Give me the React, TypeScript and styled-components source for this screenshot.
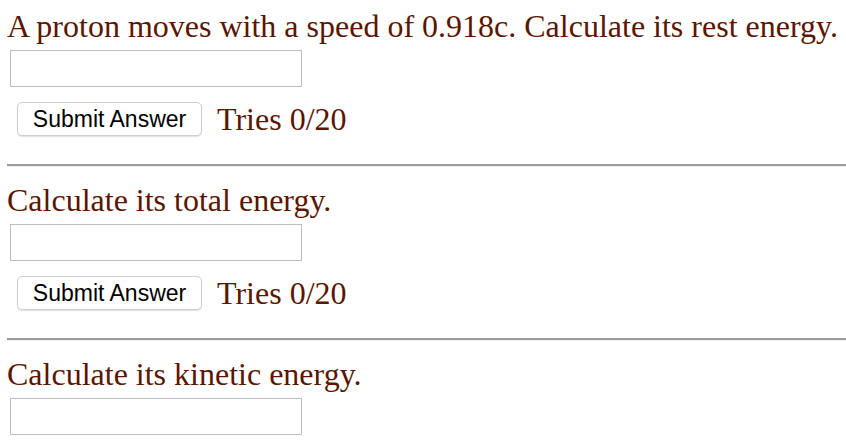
import styled, { createGlobalStyle } from "styled-components";

const GlobalStyle = createGlobalStyle`
  body {
    margin: 0;
    background: #fff;
  }
`;

const Page = styled.div`
  padding: 8px 0 0 7px;
  font-family: "Liberation Serif", "Times New Roman", serif;
  color: #5a1600;
`;

const Part = styled.section``;

const Question = styled.p`
  margin: 0;
  font-size: 32px;
  line-height: 36px;
`;

const AnswerInput = styled.input`
  display: block;
  box-sizing: border-box;
  margin: 6px 0 0 3px;
  width: 292px;
  height: 37px;
  border: 1px solid #bdbdbd;
  padding: 2px 6px;
  font-size: 20px;
  outline: none;
`;

const Actions = styled.div`
  display: flex;
  align-items: center;
  gap: 15px;
  margin: 14px 0 0 10px;
`;

const SubmitButton = styled.button`
  box-sizing: border-box;
  width: 185px;
  height: 34px;
  padding: 1px 0 0;
  background: #fff;
  border: 1px solid #cfcfcf;
  border-radius: 5px;
  box-shadow: 0 1px 1px rgba(0, 0, 0, 0.12);
  font-family: "Liberation Sans", Arial, sans-serif;
  font-size: 23px;
  color: #000;
`;

const Tries = styled.span`
  font-size: 32px;
  line-height: 36px;
`;

const Divider = styled.hr`
  margin: 27px 0 15px;
  height: 0;
  border: 0;
  border-top: 2px solid #9b9b9b;
  border-bottom: 1px solid #eeeeee;
`;

const parts = [
  "A proton moves with a speed of 0.918c. Calculate its rest energy.",
  "Calculate its total energy.",
  "Calculate its kinetic energy.",
];

export default function App() {
  return (
    <Page>
      <GlobalStyle />
      {parts.map((text, i) => (
        <Part key={i}>
          <Question>{text}</Question>
          <AnswerInput type="text" />
          {i < parts.length - 1 && (
            <>
              <Actions>
                <SubmitButton>Submit Answer</SubmitButton>
                <Tries>Tries 0/20</Tries>
              </Actions>
              <Divider />
            </>
          )}
        </Part>
      ))}
    </Page>
  );
}
